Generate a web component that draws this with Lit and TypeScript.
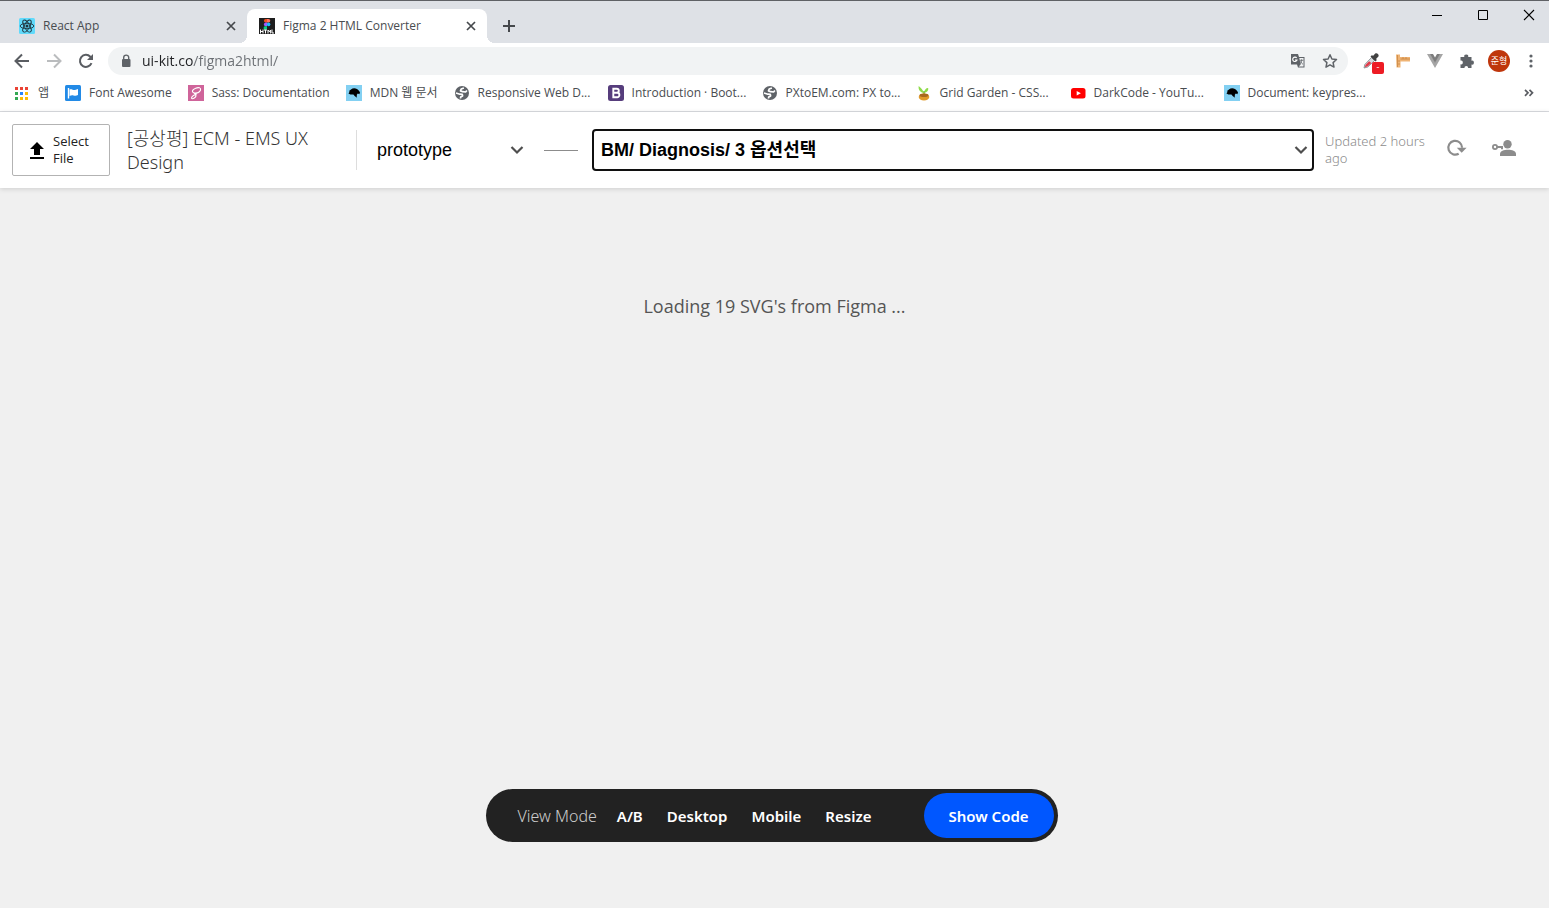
import { LitElement, html, svg, css, nothing } from "lit";
import { customElement, property } from "lit/decorators.js";
import { classMap } from "lit/directives/class-map.js";

const icons: Record<string, unknown> = {
  react: svg`<rect width="16" height="16" rx="1.5" fill="#61dafb"/><g fill="none" stroke="#20333c" stroke-width="0.9"><ellipse cx="8" cy="8" rx="6.8" ry="2.7"/><ellipse cx="8" cy="8" rx="6.8" ry="2.7" transform="rotate(60 8 8)"/><ellipse cx="8" cy="8" rx="6.8" ry="2.7" transform="rotate(120 8 8)"/></g><circle cx="8" cy="8" r="1.5" fill="#20333c"/>`,
  figma: svg`<rect width="16" height="16" fill="#1e1e1e"/><path d="M8 1H6.700a1.800 1.800 0 0 0 0 3.600H8z" fill="#f24e1e"/><path d="M8 1h1.500a1.800 1.800 0 0 1 0 3.600H8z" fill="#ff7262"/><path d="M8 4.600H6.700a1.800 1.800 0 0 0 0 3.600H8z" fill="#a259ff"/><circle cx="9.600" cy="6.400" r="1.800" fill="#1abcfe"/><path d="M8 8.200H6.700a1.800 1.800 0 1 0 1.300 2.500z" fill="#0acf83"/><path d="M1.500 11.500v4M4 11.500v4M1.500 13.500H4M5 12h3M6.500 12v3.500M9 15.500v-3.500l1.300 1.800 1.300-1.800v3.500M13 11.500V15h2" fill="none" stroke="#fff" stroke-width="1"/>`,
  back: svg`<path d="M15 8H2M8 1.500 1.500 8 8 14.500" fill="none" stroke="#5a5d62" stroke-width="2"/>`,
  forward: svg`<path d="M1 8h13M8 1.500 14.500 8 8 14.500" fill="none" stroke="#babcbe" stroke-width="2"/>`,
  reload: svg`<path d="M13.500 10.200A6 6 0 1 1 12.300 3.700L14 5.400" fill="none" stroke="#5a5d62" stroke-width="2"/><path d="M15 1v6H9z" fill="#5a5d62"/>`,
  lock: svg`<rect x="4" y="6" width="8.500" height="8" rx="1" fill="#5f6368"/><path d="M5.700 6.500V4.600a2.500 2.500 0 0 1 5 0v1.900" fill="none" stroke="#5f6368" stroke-width="1.400"/>`,
  apps: svg`<g fill="#ea4335"><path d="M1 2h3v3H1zM6 2h3v3H6zM11 2h3v3h-3z"/></g><path d="M1 7h3v3H1zM1 12h3v3H1z" fill="#34a853"/><path d="M6 7h3v3H6z" fill="#2684fc"/><path d="M11 7h3v3h-3zM6 12h3v3H6zM11 12h3v3h-3z" fill="#fbbc04"/>`,
  flag: svg`<rect width="16" height="16" rx="1.500" fill="#228ae6"/><path d="M3.500 3v10.500" stroke="#fff" stroke-width="1.400"/><path d="M4.500 4.500c2-1 3.500.8 5.500.4 1-.1 2-.6 3-.8v6c-2 .9-3 .7-4.500.3-1.500-.4-2.500-.1-4 .5z" fill="#fff"/>`,
  sass: svg`<rect width="16" height="16" fill="#cf649a"/><path d="M12.500 5.200c.8-2.500-2-3.100-4.800-2-2.400.9-4.300 3-2.600 4.200 1.500 1.100 3.200 1.600 2.900 3.500-.3 1.900-3.800 3.800-4.400 2.400-.5-1.600 2.600-3.300 4.800-4.300M6.500 8c2.500.5 4.800-.8 6-2.800" fill="none" stroke="#fff" stroke-width="1.100" stroke-linecap="round"/>`,
  mdn: svg`<rect width="16" height="16" fill="#83d0f2"/><path d="M2.500 8.600 3.600 6.800 3 6.100l2-1.700C6.600 3 9 2.800 11 4l1.500 1.300 1.500 2-.6 2-1.500-.8-1 1-.2 2.200.4 1-2.200-1.500-1.500-1.800-3 .1z" fill="#000"/>`,
  globe: svg`<circle cx="8" cy="8" r="7" fill="#5f6368"/><path d="M9.900 3 7.200 4 6.500 5.900l2.200.8 2.900.3 1.300-1.500M2 8l3.800 1.200 2.500.1.300 1.700-1.900 1-.2 1.500" fill="none" stroke="#fff" stroke-width="1.700" stroke-linejoin="round"/>`,
  bootstrap: svg`<rect width="16" height="16" rx="2.500" fill="#563d7c"/><path d="M5.300 3.800h3.500a2 2 0 0 1 0 4H5.300zM5.300 7.800h3.900a2.200 2.200 0 0 1 0 4.400H5.300z" fill="none" stroke="#fff" stroke-width="1.900"/>`,
  garden: svg`<path d="M7.800 8C7 5 5.500 3.500 2.700 1 2 5 4.500 7.300 7.800 8M8.200 7.500c.5-3 2-4.700 4-4.500C12.700 5.500 11 7.500 8.200 8" fill="#8fdc4a"/><path d="M8 6v4" stroke="#6fb52c" stroke-width="1.300"/><ellipse cx="8" cy="12" rx="5.300" ry="3.500" fill="#e09a2a"/><ellipse cx="8" cy="10.300" rx="4.500" ry="1.800" fill="#a8681e"/>`,
  youtube: svg`<rect x="1" y="3" width="14.500" height="10.500" rx="2.500" fill="#f00"/><path d="m6.700 5.900 4.200 2.300-4.200 2.400z" fill="#fff"/>`,
  translate: svg`<path d="M1 1h7l1 3h5.500v10.500H8l-1-3H1z" fill="#5f6368"/><path d="M9.300 5h4.200v8.500H8.700l2-2z" fill="#f1f3f4"/><path d="M6.700 5A2.200 2.200 0 1 0 7 7H5" fill="none" stroke="#fff" stroke-width="1.100"/><path d="M9.800 7.300h3.500M11.600 6.300v1c0 1.500-.7 2.700-1.500 3.500M10.500 8.500c.6 1.300 1.400 2.100 2.500 2.800" fill="none" stroke="#5f6368" stroke-width=".8"/>`,
  star: svg`<path d="m8 1.800 1.900 4.200 4.600.5-3.400 3.100.9 4.500L8 11.800l-4 2.300.9-4.500L1.500 6.500 6.100 6z" fill="none" stroke="#5f6368" stroke-width="1.500" stroke-linejoin="round"/>`,
  dropper: svg`<path d="M1 15 1.800 11.500 8.500 4.500 11.500 7.500 4.800 14z" fill="#d7dcdf" stroke="#7d8589" stroke-width=".8"/><path d="m1.800 14.200.8-2.400 3.500-3.500L8.300 10l-3.500 3.200z" fill="#e23c4b"/><path d="m7.500 3.500 1.300-1.200 1.400.5L12 .8c1.800-1.600 4.800.9 3.200 3l-2 2 .5 1.400-1.300 1.200z" fill="#424242"/>`,
  ruler: svg`<path d="M1 1.500h4V4h10v4.500H5.500v6h-4z" fill="#efb475"/><path d="M2.500 2v12M5.500 6H15M8 4v2M11 4v2M3 8h2M3 11h2" stroke="#c98643" stroke-width=".8"/>`,
  vue: svg`<path d="M0 1h3.500L8 9l4.500-8H16L8 15z" fill="#a5a5a5"/><path d="M3 1h3l2 3.500L10 1h3L8 9.800z" fill="#7d7d7d"/>`,
  puzzle: svg`<path d="M1.500 4h3.800a2 2 0 1 1 3.900 0h3.300v3.700a2 2 0 1 1 0 3.900V15H9.200a1.900 1.900 0 1 0-3.800 0H1.500v-3.700a1.900 1.900 0 1 0 0-3.700z" fill="#5f6368"/>`,
  dots: svg`<g fill="#5f6368"><circle cx="8" cy="3" r="1.600"/><circle cx="8" cy="8" r="1.600"/><circle cx="8" cy="13" r="1.600"/></g>`,
  close: svg`<path d="m4 4 8 8M12 4l-8 8" stroke="#45484c" stroke-width="1.700"/>`,
  plus: svg`<path d="M8 2v12M2 8h12" stroke="#45484c" stroke-width="2"/>`,
  minimize: svg`<path d="M3 8.500h10" stroke="#000"/>`,
  maximize: svg`<path d="M3.500 3.500h9v9h-9z" fill="none" stroke="#000"/>`,
  exit: svg`<path d="m3 3 10 10M13 3 3 13" stroke="#000" stroke-width="1.100"/>`,
  more: svg`<path d="m4 4.800 3 3-3 3M8.500 4.800l3 3-3 3" fill="none" stroke="#5a5d62" stroke-width="1.700"/>`,
  upload: svg`<path d="M8 0 1 7h4v6h6V7h4zM1 15h14v2H1z" fill="#000"/>`,
  chevron: svg`<path d="m2.500 5 5.500 5.500L13.500 5" fill="none" stroke="#4e4e4e" stroke-width="2.200"/>`,
  refresh: svg`<path d="M16.100 9.800A6.900 6.900 0 1 0 12.700 15.700" fill="none" stroke="#8c8c8c" stroke-width="2.200"/><path d="M10.800 9.800h9.800l-4.900 5z" fill="#8c8c8c"/>`,
  keyUser: svg`<circle cx="15.500" cy="6.200" r="4.200" fill="#8c8c8c"/><path d="M8 18v-2c0-3 4-4.200 8-4.200s8 1.200 8 4.200v2z" fill="#8c8c8c"/><circle cx="3" cy="9" r="2.100" fill="none" stroke="#8c8c8c" stroke-width="1.800"/><path d="M5 8h6v3.200H9V10H5z" fill="#8c8c8c"/>`,
};

@customElement("ui-icon")
class UiIcon extends LitElement {
  @property() name = "";
  @property() box = "0 0 16 16";
  static styles = css`
    :host { display: block; width: 16px; height: 16px; flex: none; }
    svg { display: block; width: 100%; height: 100%; }
  `;
  render() {
    return html`<svg viewBox=${this.box} aria-hidden="true">${icons[this.name] ?? nothing}</svg>`;
  }
}

const reset = css`
  * { box-sizing: border-box; }
  button, input, select { margin: 0; padding: 0; border: 0; background: none; font: inherit; color: inherit; }
  button { display: flex; align-items: center; flex: none; cursor: pointer; }
  a { color: inherit; text-decoration: none; }
`;

interface Bookmark { icon: string; label: string; capped?: boolean }

const bookmarks: Bookmark[] = [
  { icon: "apps", label: "앱" },
  { icon: "flag", label: "Font Awesome" },
  { icon: "sass", label: "Sass: Documentation" },
  { icon: "mdn", label: "MDN 웹 문서" },
  { icon: "globe", label: "Responsive Web D...", capped: true },
  { icon: "bootstrap", label: "Introduction · Boot...", capped: true },
  { icon: "globe", label: "PXtoEM.com: PX to...", capped: true },
  { icon: "garden", label: "Grid Garden - CSS...", capped: true },
  { icon: "youtube", label: "DarkCode - YouTu...", capped: true },
  { icon: "mdn", label: "Document: keypres...", capped: true },
];

@customElement("browser-chrome")
class BrowserChrome extends LitElement {
  static styles = [reset, css`
    :host { display: block; font: 12px/16px "Open Sans", "Noto Sans CJK KR", sans-serif; color: #494c50; }
    .tabs { display: flex; height: 43px; padding: 8px 0 0 7px; background: #dee1e6; border-top: 1px solid #5f6165; }
    .tab { display: flex; align-items: center; width: 240px; height: 34px; padding: 0 8px 0 12px; position: relative; }
    .tab.active { background: #fff; border-radius: 8px 8px 0 0; }
    .tab.active::before, .tab.active::after { content: ""; position: absolute; bottom: 0; width: 8px; height: 8px; }
    .tab.active::before { left: -8px; background: radial-gradient(circle at 0 0, #dee1e6 8px, #fff 8px); }
    .tab.active::after { right: -8px; background: radial-gradient(circle at 100% 0, #dee1e6 8px, #fff 8px); }
    .tab-title { flex: 1; gap: 8px; text-align: left; }
    .new-tab { align-self: center; margin-left: 14px; }
    .window { display: flex; gap: 30px; margin-left: auto; padding-right: 12px; height: 12px; align-items: center; }
    .toolbar { display: flex; align-items: center; height: 36px; padding: 0 10px 0 14px; background: #fff; }
    .nav { display: flex; gap: 16px; }
    .address { display: flex; align-items: center; flex: 1; height: 28px; margin: 0 15px 0 14px; padding: 0 10px; border-radius: 14px; background: #f1f3f4; gap: 16px; }
    .address label { display: flex; flex: 1; align-items: center; gap: 8px; }
    .address input { flex: 1; min-width: 0; outline: 0; font-size: 14px; line-height: 20px; color: transparent;
      background: linear-gradient(90deg, #202124 51px, #6b6f74 51px); -webkit-background-clip: text; background-clip: text; }
    .extensions { display: flex; align-items: center; gap: 16px; }
    .picker { position: relative; }
    .badge { position: absolute; left: 9px; top: 9px; width: 12px; height: 12px; border-radius: 2px; background: #ed1c24; color: #fff; font-size: 9px; line-height: 10px; text-align: center; }
    .avatar { justify-content: center; width: 22px; height: 22px; margin: 0 -3px; border-radius: 50%; background: #bf360c; color: #fff; font-size: 9px; line-height: 12px; }
    .bookmarks { display: flex; align-items: center; gap: 16px; height: 33px; padding: 0 12px 5px 14px; background: #fff; border-bottom: 1px solid #dadce0; }
    .bookmark { display: flex; align-items: center; gap: 8px; flex: none; white-space: nowrap; }
    .bookmark.capped { width: 138px; }
    .more { margin-left: auto; }
  `];
  render() {
    return html`
      <div class="tabs">
        ${this.tab("react", "React App", false)}
        ${this.tab("figma", "Figma 2 HTML Converter", true)}
        <button class="new-tab" aria-label="New tab"><ui-icon name="plus"></ui-icon></button>
        <div class="window">
          <button aria-label="Minimize"><ui-icon name="minimize"></ui-icon></button>
          <button aria-label="Maximize"><ui-icon name="maximize"></ui-icon></button>
          <button aria-label="Close"><ui-icon name="exit"></ui-icon></button>
        </div>
      </div>
      <div class="toolbar">
        <div class="nav">
          <button aria-label="Back"><ui-icon name="back"></ui-icon></button>
          <button aria-label="Forward"><ui-icon name="forward"></ui-icon></button>
          <button aria-label="Reload"><ui-icon name="reload"></ui-icon></button>
        </div>
        <div class="address">
          <label><ui-icon name="lock"></ui-icon><input type="text" aria-label="Address" value="ui-kit.co/figma2html/" /></label>
          <button aria-label="Translate"><ui-icon name="translate"></ui-icon></button>
          <button aria-label="Bookmark"><ui-icon name="star"></ui-icon></button>
        </div>
        <div class="extensions">
          <button class="picker" aria-label="Color picker"><ui-icon name="dropper"></ui-icon><span class="badge">-</span></button>
          <button aria-label="Ruler"><ui-icon name="ruler"></ui-icon></button>
          <button aria-label="Vue"><ui-icon name="vue"></ui-icon></button>
          <button aria-label="Extensions"><ui-icon name="puzzle"></ui-icon></button>
          <button class="avatar">준형</button>
          <button aria-label="Menu"><ui-icon name="dots"></ui-icon></button>
        </div>
      </div>
      <nav class="bookmarks">
        ${bookmarks.map((b) => html`<a href="#" class=${classMap({ bookmark: true, capped: !!b.capped })}><ui-icon name=${b.icon}></ui-icon><span>${b.label}</span></a>`)}
        <button class="more" aria-label="More bookmarks"><ui-icon name="more"></ui-icon></button>
      </nav>`;
  }
  tab(icon: string, title: string, active: boolean) {
    return html`<div class=${classMap({ tab: true, active })}>
      <button class="tab-title"><ui-icon name=${icon}></ui-icon>${title}</button>
      <button aria-label="Close tab"><ui-icon name="close"></ui-icon></button>
    </div>`;
  }
}

@customElement("file-header")
class FileHeader extends LitElement {
  static styles = [reset, css`
    :host { display: block; position: relative; font-family: "Noto Sans", "Noto Sans CJK KR", sans-serif; }
    .bar { display: flex; align-items: center; height: 76px; padding: 0 33px 0 12px; background: #fff; box-shadow: 0 1px 5px rgba(0, 0, 0, 0.15); }
    .file { gap: 8px; width: 98px; height: 52px; padding: 0 16px; border: 1px solid #b3b3b3; border-radius: 2px; font: 13px/17px "Open Sans", sans-serif; color: #222; text-align: left; }
    .file ui-icon { height: 17px; }
    .title { width: 229px; margin: 0 0 0 17px; padding-right: 30px; font-size: 18px; line-height: 24px; font-weight: 300; color: #333; }
    .rule { width: 1px; height: 40px; background: #ddd; }
    .field { position: relative; display: flex; align-items: center; }
    .field select { appearance: none; width: 100%; height: 42px; font: 18px/24px "Liberation Sans", "Noto Sans CJK KR", sans-serif; color: #000; outline: 0; }
    .field ui-icon { position: absolute; right: 5px; pointer-events: none; }
    .page { width: 173px; }
    .page select { padding-left: 20px; }
    .dash { width: 34px; height: 1px; margin: 0 14px; background: #8c8c8c; }
    .frame { flex: 1; }
    .field.frame select { padding-left: 7px; border: 2px solid #101010; border-radius: 4px; font-weight: 700; }
    .updated { width: 101px; margin: 0 20px 0 11px; font-size: 13px; line-height: 17px; font-weight: 300; color: #8c8c8c; }
    .actions { display: flex; gap: 22px; }
    .actions ui-icon { width: 24px; height: 24px; }
  `];
  render() {
    return html`<header class="bar">
      <button class="file"><ui-icon name="upload" box="0 0 16 17"></ui-icon><span>Select<br />File</span></button>
      <h1 class="title">[공상평] ECM - EMS UX Design</h1>
      <div class="rule"></div>
      <div class="field page"><select aria-label="Page"><option>prototype</option></select><ui-icon name="chevron"></ui-icon></div>
      <div class="dash"></div>
      <div class="field frame"><select aria-label="Frame"><option>BM/ Diagnosis/ 3 옵션선택</option></select><ui-icon name="chevron"></ui-icon></div>
      <p class="updated">Updated 2 hours ago</p>
      <div class="actions">
        <button aria-label="Refresh"><ui-icon name="refresh" box="0 0 24 24"></ui-icon></button>
        <button aria-label="Account"><ui-icon name="keyUser" box="0 0 24 24"></ui-icon></button>
      </div>
    </header>`;
  }
}

@customElement("view-bar")
class ViewBar extends LitElement {
  static styles = [reset, css`
    :host { display: block; font: 600 15px/20px "Noto Sans", sans-serif; }
    .bar { display: flex; align-items: center; width: 572px; height: 53px; padding: 0 4px 0 32px; border-radius: 27px; background: #222; color: #fff; }
    .label { margin-right: 20px; font-size: 16px; font-weight: 300; color: #ccc; }
    .modes { display: flex; gap: 24px; }
    .show { justify-content: center; width: 130px; height: 45px; margin-left: auto; border-radius: 23px; background: #0057ff; }
  `];
  render() {
    return html`<div class="bar">
      <span class="label">View Mode</span>
      <div class="modes">${["A/B", "Desktop", "Mobile", "Resize"].map((m) => html`<button>${m}</button>`)}</div>
      <button class="show">Show Code</button>
    </div>`;
  }
}

@customElement("app-root")
class AppRoot extends LitElement {
  static styles = css`
    :host { display: flex; flex-direction: column; min-height: 100vh; background: #f0f0f0; font-family: "Open Sans", sans-serif; }
    main { display: flex; flex: 1; flex-direction: column; align-items: center; padding: 106px 0 66px; }
    .status { margin: 0; font-size: 18px; line-height: 24px; color: #555; }
    view-bar { margin-top: auto; padding-right: 6px; }
  `;
  render() {
    return html`<browser-chrome></browser-chrome><file-header></file-header>
      <main><p class="status">Loading 19 SVG's from Figma ...</p><view-bar></view-bar></main>`;
  }
}
